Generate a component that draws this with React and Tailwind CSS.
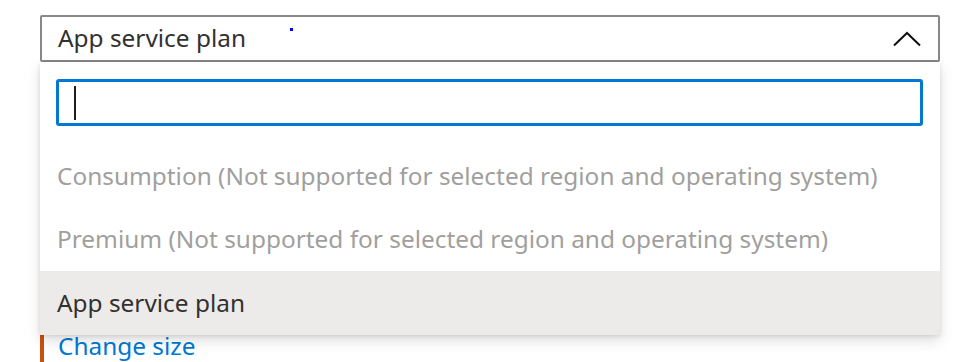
import React from 'react';

const options = [
  { label: 'Consumption (Not supported for selected region and operating system)', disabled: true },
  { label: 'Premium (Not supported for selected region and operating system)', disabled: true },
  { label: 'App service plan', selected: true },
];

const App = () => {
  return (
    <div className="relative w-[970px] h-[362px] overflow-hidden bg-white font-['Noto_Sans','Open_Sans',sans-serif] text-[24.4px] text-[#323130]">
      <div className="pl-[40px] pt-[15px] w-[940px]">
        {/* select box */}
        <div className="h-[47px] border-2 border-[#8a8886] rounded-[2px] flex items-center justify-between pl-[16px] pr-[16px]">
          <span className="leading-none">App service plan</span>
          <svg width="28" height="16" viewBox="0 0 28 16" fill="none" className="mr-[1px]">
            <path d="M1 14.5 L14 2 L27 14.5" stroke="#111" strokeWidth="2" />
          </svg>
        </div>
        {/* content below the menu */}
        <div className="mt-[266px] border-l-[4px] border-[#ca5010] h-[40px] pl-[14px]">
          <span className="text-[#0078d4] leading-none">Change size</span>
        </div>
      </div>

      {/* stray focus dot */}
      <div className="absolute left-[290px] top-[28px] w-[3px] h-[3px] bg-[#0000ff]" />

      {/* dropdown menu */}
      <div className="absolute left-[40px] top-[62px] w-[900px] bg-white rounded-b-[2px] shadow-[0_6px_14px_rgba(0,0,0,0.13),0_1px_4px_rgba(0,0,0,0.11)]">
        <div className="pt-[17px] pl-[16px] pr-[17px] pb-[19px]">
          <div className="h-[47px] border-[3px] border-[#0078d4] rounded-[3px] flex items-center pl-[15px]">
            <div className="w-[2px] h-[34px] bg-[#201f1e]" />
          </div>
        </div>
        {options.map((o, i) => (
          <div
            key={o.label}
            className={`flex items-center pl-[17px] ${i === 2 ? 'h-[64px]' : 'h-[63px]'} ${o.selected ? 'bg-[#edebe9] text-[#323130]' : ''} ${o.disabled ? 'text-[#a19f9d]' : ''}`}
          >
            {o.label}
          </div>
        ))}
      </div>
    </div>
  );
};

export default App;
